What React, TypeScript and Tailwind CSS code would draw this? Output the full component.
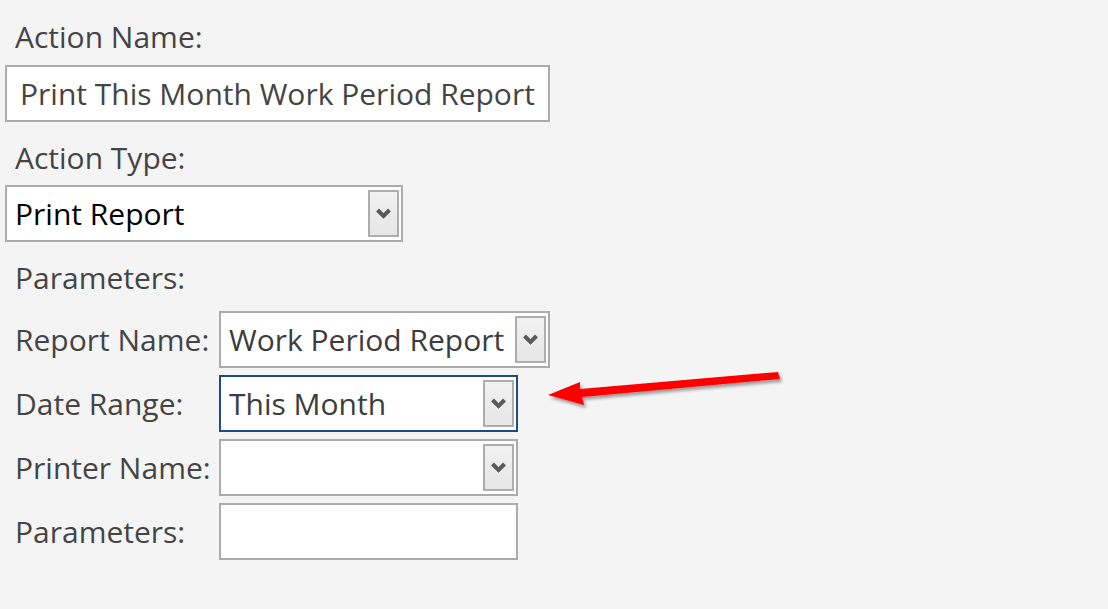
import type { ReactNode } from "react";

const font = { fontFamily: '"Open Sans", "Noto Sans", Arial, sans-serif' };

function Chevron() {
  return (
    <svg width="15" height="11" viewBox="0 0 15 11" className="block">
      <path d="M1.5 2 L7.5 8 L13.5 2" fill="none" stroke="#5a5a5a" strokeWidth="4" strokeLinejoin="miter" />
    </svg>
  );
}

function Combo({
  value,
  width,
  focused = false,
  textClass = "text-[#3c3c3c]",
}: {
  value?: string;
  width: string;
  focused?: boolean;
  textClass?: string;
}) {
  return (
    <div
      className={`${width} h-[57px] flex items-center bg-white border-2 ${
        focused ? "border-[#1f4a8a]" : "border-[#ababab]"
      } pl-[8px] pr-[2px] py-[3px]`}
    >
      <span className={`flex-1 text-[30px] whitespace-nowrap ${textClass}`}>{value}</span>
      <div className="w-[31px] h-full shrink-0 flex items-center justify-center border-2 border-[#adadad] bg-gradient-to-b from-[#f1f1f1] to-[#e6e6e6]">
        <Chevron />
      </div>
    </div>
  );
}

function Label({ children, className = "" }: { children: ReactNode; className?: string }) {
  return (
    <div className={`h-[44px] flex items-center pl-[10px] text-[30px] text-[#444444] whitespace-nowrap ${className}`}>
      {children}
    </div>
  );
}

function Row({ label, children }: { label: string; children: ReactNode }) {
  return (
    <div className="flex items-center h-[57px]">
      <div className="w-[214px] pl-[10px] text-[30px] text-[#444444] whitespace-nowrap">{label}</div>
      {children}
    </div>
  );
}

export default function App() {
  return (
    <div className="relative w-[1108px] h-[609px] bg-[#f4f4f4] px-[5px] overflow-hidden" style={font}>
      <Label className="mt-[14px] mb-[7px]">Action Name:</Label>
      <div className="w-[545px] h-[57px] flex items-center bg-white border-2 border-[#ababab] pl-[13px] text-[30px] text-[#444444] whitespace-nowrap">
        Print This Month Work Period Report
      </div>

      <Label className="mt-[13px] mb-[6px]">Action Type:</Label>
      <Combo value="Print Report" width="w-[398px]" textClass="text-black" />

      <Label className="mt-[13px] mb-[12px]">Parameters:</Label>
      <div className="flex flex-col gap-[7px]">
        <Row label="Report Name:">
          <Combo value="Work Period Report" width="w-[331px]" />
        </Row>
        <Row label="Date Range:">
          <Combo value="This Month" width="w-[299px]" focused />
        </Row>
        <Row label="Printer Name:">
          <Combo width="w-[299px]" />
        </Row>
        <Row label="Parameters:">
          <div className="w-[299px] h-[57px] bg-white border-2 border-[#ababab]" />
        </Row>
      </div>

      <svg className="absolute inset-0 pointer-events-none" width="1108" height="609" viewBox="0 0 1108 609">
        <defs>
          <filter id="shadow" x="-10%" y="-50%" width="120%" height="200%">
            <feDropShadow dx="2" dy="3" stdDeviation="1.6" floodColor="#000" floodOpacity="0.35" />
          </filter>
        </defs>
        <polygon
          points="548,395 580,382 580,389 778,372 780,379 582,397 584,405"
          fill="#ff0000"
          filter="url(#shadow)"
        />
      </svg>
    </div>
  );
}
